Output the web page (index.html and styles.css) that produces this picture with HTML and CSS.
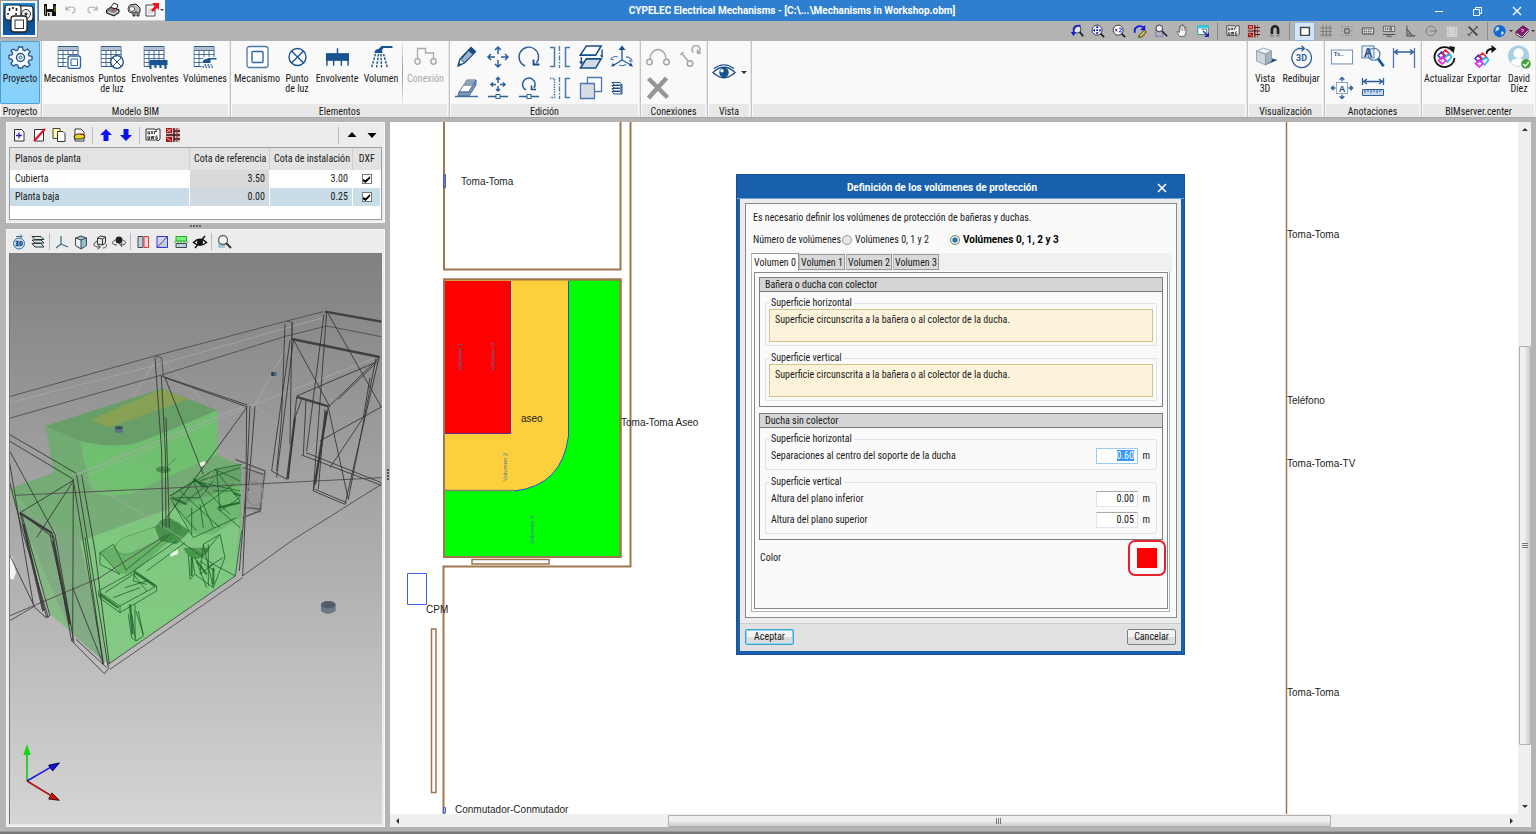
FILE: index.html
```html
<!DOCTYPE html>
<html lang="es">
<head>
<meta charset="utf-8">
<title>CYPELEC Electrical Mechanisms</title>
<link rel="stylesheet" href="styles.css">
</head>
<body>
<svg class="defs" aria-hidden="true">
  <symbol id="i-gear" viewBox="0 0 24 24"><path d="M10 2h4l.6 3 1.8.8L19 4l2.500 2.700L19.800 9l.8 1.800 2.900.5v3.400l-3 .6-.8 1.900 1.700 2.500-2.500 2.400-2.500-1.600-1.800.8L14 23h-4l-.6-2.800-1.800-.8L5 21.100l-2.500-2.400 1.700-2.500-.8-1.900-2.900-.6v-3.400l2.900-.5.8-1.800L2.500 5.700 5 4l2.600 1.700 1.800-.8z" fill="#f4faff" stroke="#2c5688" stroke-width="1.300"/><circle cx="12" cy="12.500" r="4" fill="none" stroke="#2c5688" stroke-width="1.500"/><circle cx="12" cy="12.500" r="1.500" fill="#fff" stroke="#2c5688"/></symbol>
  <symbol id="i-grid" viewBox="0 0 24 24"><path d="M.5 1.500h20v20H.5z" fill="#fff" stroke="#2f5c90"/><path d="M1 2h19v3H1z" fill="#b8bdcc"/><path d="M.5 5.500h20M.5 9.500h20M.5 13.500h20M.5 17.500h20M5.500 5v16M10.500 5v16M15.500 5v16" stroke="#4a6f9c" fill="none"/></symbol>
  <symbol id="i-mecs" viewBox="0 0 24 24"><use href="#i-grid"/><path d="M9 10h15v14H9z" fill="#f9f9f9"/><rect x="10.500" y="11" width="12.500" height="12.500" rx="2" fill="#fff" stroke="#2c66a6" stroke-width="1.300"/><path d="M13.500 14h6.500v6.500h-6.500z" fill="#fff" stroke="#2c66a6"/></symbol>
  <symbol id="i-luces" viewBox="0 0 24 24"><use href="#i-grid"/><circle cx="16.500" cy="17" r="6.300" fill="#fff" stroke="#1d4b80" stroke-width="1.300"/><path d="M12 12.500l9 9m0-9l-9 9" stroke="#1d4b80"/></symbol>
  <symbol id="i-envs" viewBox="0 0 24 24"><use href="#i-grid"/><path d="M7 21h17v3H7z" fill="#f9f9f9"/><path d="M6 15h18v5h-1v4h-2v-4h-3v3h-2v-3h-3v3h-2v-3H8v4H6z" fill="#175390"/></symbol>
  <symbol id="i-vols" viewBox="0 0 24 24"><use href="#i-grid"/><path d="M10 12h14v12H8v-6z" fill="#f9f9f9"/><path d="M9 18c0-3 2-4 4-4l2-1h8v1.500h-6L17 18z" fill="#175390"/><path d="M11 20h7M9 22h11" stroke="#175390" stroke-width="1.500" stroke-dasharray="1.500 1.500"/></symbol>
  <symbol id="i-mec" viewBox="0 0 24 24"><rect x="1.500" y="1.500" width="21" height="21" rx="2.500" fill="#fff" stroke="#4d79ab" stroke-width="1.300"/><rect x="6.500" y="6.500" width="11" height="11" rx="1" fill="#fff" stroke="#2c66a6" stroke-width="1.400"/></symbol>
  <symbol id="i-luz" viewBox="0 0 24 24"><circle cx="12" cy="12" r="8.500" fill="none" stroke="#1d5490" stroke-width="1.400"/><path d="M6 6l12 12M18 6L6 18" stroke="#1d5490" stroke-width="1.400"/></symbol>
  <symbol id="i-env" viewBox="0 0 26 24"><path d="M1 8h24v8H1z" fill="#175390"/><path d="M13 3v6M2 15v6M9 15v6M17 15v6M24 15v6" stroke="#175390" stroke-width="1.500"/></symbol>
  <symbol id="i-vol" viewBox="0 0 24 24"><path d="M5 8c0-3 2-4 4-4l3-3h11v2H14l-1.500 2 .5 3z" fill="#175390"/><path d="M6 9L2 23M9 9L7 23M11.500 9l.5 14M14 9l4 14" stroke="#175390" stroke-width="1.400" stroke-dasharray="2.500 1.200" fill="none"/></symbol>
  <symbol id="i-con" viewBox="0 0 24 24"><path d="M4 14V3.500h8V8h8v6" fill="none" stroke="#a9a9a9" stroke-width="1.300"/><circle cx="4" cy="16.500" r="2.700" fill="none" stroke="#a9a9a9" stroke-width="1.400"/><circle cx="20" cy="16.500" r="2.700" fill="none" stroke="#a9a9a9" stroke-width="1.400"/></symbol>
  <symbol id="i-pencil" viewBox="0 0 24 24"><path d="M3 21l2-7L16 2.500l4.500 4L9.500 18z" fill="#fff" stroke="#1b4d85" stroke-width="1.400"/><path d="M16 2.500l4.500 4-2.500 3-4.500-4zM3 21l1-3.500L6.500 20z" fill="#1b4d85"/><path d="M6 14.500l3.500 3L18 9.500 13.500 5.500z" fill="#9db4cf" stroke="#1b4d85"/><path d="M5 14l10-10" stroke="#1b4d85"/></symbol>
  <symbol id="i-move" viewBox="0 0 24 24"><path d="M12 9V2.500M12 15v6.500M9 12H2.500M15 12h6.500M9 5l3-3 3 3M9 19l3 3 3-3M5 9l-3 3 3 3M19 9l3 3-3 3" fill="none" stroke="#2b5f99" stroke-width="1.500"/></symbol>
  <symbol id="i-rot" viewBox="0 0 24 24"><path d="M8 21A9.800 9.800 0 1 1 19.500 18" fill="none" stroke="#2b5f99" stroke-width="1.400"/><path d="M16.500 14.500v5h6" fill="none" stroke="#1b4d85" stroke-width="1.800"/></symbol>
  <symbol id="i-sym" viewBox="0 0 24 24"><path d="M2 2.500h4.500v19H2M22 2.500h-4.500v19H22" fill="none" stroke="#4c78ab" stroke-width="1.500"/><path d="M11.500 1v22" stroke="#4c78ab" stroke-width="1.300" stroke-dasharray="5 1.500 1.500 1.500"/></symbol>
  <symbol id="i-symd" viewBox="0 0 24 24"><path d="M2 2.500h4.500v19H2" fill="none" stroke="#4c78ab" stroke-width="1.500" stroke-dasharray="1.500 1"/><path d="M22 2.500h-4.500v19H22" fill="none" stroke="#4c78ab" stroke-width="1.500"/><path d="M11.500 1v22" stroke="#4c78ab" stroke-width="1.300" stroke-dasharray="5 1.500 1.500 1.500"/></symbol>
  <symbol id="i-planes" viewBox="0 0 26 26"><path d="M8 1h16l-6 10H1.500z" fill="#fff" stroke="#164e8a" stroke-width="1.700"/><path d="M8 15h16l-6 10H1.500z" fill="#d5dbe6" stroke="#164e8a" stroke-width="1.700"/><path d="M25 5v7M2.500 13v7" stroke="#164e8a" stroke-width="1.500"/><path d="M22.500 11h5L25 14zM0 18h5l-2.500 3.500z" fill="#164e8a"/></symbol>
  <symbol id="i-axes" viewBox="0 0 24 24"><path d="M12 15V3M12 15l-8 5M12 15l9 5" stroke="#2b5f99" stroke-width="1.400" fill="none"/><path d="M8.500 5L12 .5 15.500 5zM3 18l-2 3.500L5 21zM19 21l4 .5-2-4z" fill="#164e8a"/><path d="M8 12c-3-1-6 0-7 2l3 1M16 12c3 0 6 2 6 4l-3 0M9 20c2 1 6 1 7-1" fill="none" stroke="#5a84b2" stroke-width="1.300"/></symbol>
  <symbol id="i-erase" viewBox="0 0 24 24"><path d="M4 16L12 4h9l-7 12z" fill="#fff" stroke="#46719f"/><path d="M12 4h9l-4 6H8z" fill="#8f9fb8"/><path d="M4 16h10l7-12v5l-7 11H3z" fill="#8296b5" stroke="#46719f"/><path d="M0 20.500h23" stroke="#46719f" stroke-width="1.500"/></symbol>
  <symbol id="i-movep" viewBox="0 0 24 24"><path d="M12 7V2M12 10v5M10 8.500H5.500M14 8.500h4.500M10 3.500l2-2 2 2M10 13l2 2 2-2M7 6.500l-2 2 2 2M17 6.500l2 2-2 2" fill="none" stroke="#2b5f99" stroke-width="1.500"/><path d="M2 20.500h8M14 20.500h8" stroke="#2b5f99" stroke-width="1.300"/><rect x="10" y="18.500" width="4" height="4" fill="none" stroke="#2b5f99"/></symbol>
  <symbol id="i-rotp" viewBox="0 0 24 24"><path d="M9 14A6.300 6.300 0 1 1 17 12" fill="none" stroke="#2b5f99" stroke-width="1.500"/><path d="M14.500 9.500v4h4.500" fill="none" stroke="#1b4d85" stroke-width="1.500"/><path d="M2 20.500h8M14 20.500h8" stroke="#2b5f99" stroke-width="1.300"/><rect x="10" y="18.500" width="4" height="4" fill="none" stroke="#2b5f99"/></symbol>
  <symbol id="i-copy2" viewBox="0 0 24 24"><path d="M8.500 1.500h14v14h-14z" fill="#fff" stroke="#4c78ab" stroke-width="1.300"/><path d="M1.500 7.500h14v15h-14z" fill="#d9dce6" stroke="#4c78ab" stroke-width="1.300"/></symbol>
  <symbol id="i-stack" viewBox="0 0 24 24"><g fill="#fff" stroke="#1b4d85"><path d="M2 15.500h8l2 2.500H4zM2 12.500h8l2 2.500H4zM2 9.500h8l2 2.500H4zM2 6.500h8l2 2.500H4z"/><path d="M12 8.500v9"/></g></symbol>
  <symbol id="i-arc" viewBox="0 0 24 24"><path d="M4 14a8 9.500 0 0 1 16 0" fill="none" stroke="#a3a3a3" stroke-width="1.300"/><circle cx="3.500" cy="17" r="2.800" fill="none" stroke="#a3a3a3" stroke-width="1.400"/><circle cx="20.500" cy="17" r="2.800" fill="none" stroke="#a3a3a3" stroke-width="1.400"/></symbol>
  <symbol id="i-recon" viewBox="0 0 24 24"><path d="M3 8.500L9 16M1.500 10l3-3" stroke="#a3a3a3" stroke-width="1.300"/><circle cx="11" cy="18.500" r="2.800" fill="none" stroke="#a3a3a3" stroke-width="1.400"/><path d="M14.500 7.500a4 4 0 1 1 5 0M22 8h-3.500V4.500" fill="none" stroke="#a3a3a3" stroke-width="1.400"/></symbol>
  <symbol id="i-x" viewBox="0 0 24 24"><path d="M2.500 2.500l19 19M20.500 2L2.500 22" stroke="#959595" stroke-width="4.500"/></symbol>
  <symbol id="i-eye" viewBox="0 0 24 20"><path d="M1 9.500Q12-1 23 9.500Q12 20 1 9.500z" fill="#fff" stroke="#1b4d85" stroke-width="1.300"/><path d="M2 5.500Q12-2 22 5.500" fill="none" stroke="#1b4d85" stroke-width="1.200"/><circle cx="12" cy="9.500" r="4.800" fill="#15508f"/><circle cx="10" cy="7.800" r="1.700" fill="#fff"/></symbol>
  <symbol id="i-v3d" viewBox="0 0 24 24"><path d="M12 20l12-5-7-2z" fill="#1b4d85"/><path d="M3 6l7-3 8 3-6 3z" fill="#eef1f4" stroke="#8795a6" stroke-width=".8"/><path d="M3 6l9 3v11l-9-4z" fill="#cfd5dc" stroke="#8795a6" stroke-width=".8"/><path d="M12 9l6-3v10l-6 4z" fill="#a9b4c1" stroke="#8795a6" stroke-width=".8"/></symbol>
  <symbol id="i-dim" viewBox="0 0 24 24"><path d="M1.500 3v20M22.500 3v20" stroke="#4c78ab" stroke-width="1.300"/><path d="M2 7h20M6 4.500L2.500 7 6 9.500M18 4.500L21.500 7 18 9.500" fill="none" stroke="#2b5f99" stroke-width="1.300"/></symbol>
  <symbol id="i-ruler" viewBox="0 0 24 24"><path d="M1.500 2v7M22.500 2v7M2 5.500h20M6 3L2.500 5.500 6 8M18 3l3.500 2.500L18 8" fill="none" stroke="#2b5f99" stroke-width="1.300"/><path d="M1.500 13.500h21v6h-21z" fill="#c9d8e8" stroke="#2b5f99"/><path d="M4 14v3M7 14v2M10 14v3M13 14v2M16 14v3M19 14v2" stroke="#2b5f99"/></symbol>
  <symbol id="i-bim" viewBox="0 0 24 24"><g fill="none" stroke-width="1.700" stroke-linejoin="round"><path d="M9 7L5.500 10.500 9 14 12.500 10.500z" stroke="#2338e0"/><path d="M13 5l-3.500 3.500L13 12l3.500-3.500z" stroke="#f0203a"/><path d="M14 11l3.500-1.500L19 12l-4 5-3.500-3.500z" stroke="#27b8f5"/><path d="M9.500 12L6 15.500l4 3.500 3.500-3.500z" stroke="#f02be0"/></g></symbol>
  <symbol id="i-act" viewBox="0 0 24 24"><use href="#i-bim"/><path d="M20 6A10 10 0 1 0 22 13" fill="none" stroke="#111" stroke-width="1.800"/><path d="M16.500 1l6 1-1.500 6.500z" fill="#111"/></symbol>
  <symbol id="i-exp" viewBox="0 0 24 24"><use href="#i-bim" x="-3" y="3"/><path d="M14 9c0-4 3-5 6-5" fill="none" stroke="#111" stroke-width="1.800"/><path d="M19 0l5 4-5 4z" fill="#111"/></symbol>
  <symbol id="i-user" viewBox="0 0 26 26"><circle cx="12" cy="12" r="11.500" fill="#a9cfe2"/><circle cx="12" cy="9" r="5.500" fill="#fff"/><path d="M3.500 19c2-6 15-6 17 0a11.500 11.500 0 0 1-17 0z" fill="#fff"/><circle cx="20" cy="20.500" r="5.200" fill="#43a236"/><path d="M17 20.500l2.300 2.500 3.700-4.500" fill="none" stroke="#fff" stroke-width="1.600"/></symbol>

  <symbol id="s-save" viewBox="0 0 16 16"><path d="M2 2h12v12H3l-1-1z" fill="#111"/><path d="M5 2h6v5H5z" fill="#fff"/><path d="M3 4h1v9H3zM12.500 4h1v6h-1z" fill="#8a8a1c"/><path d="M5 10h5v4H5z" fill="#ddd"/><path d="M6 11h1.500v3H6z" fill="#111"/></symbol>
  <symbol id="s-undo" viewBox="0 0 16 16"><path d="M3 4v4h4M3 8c2-4 9-4 9 0 0 2-2 3-3 3" fill="none" stroke="#b0b0b0" stroke-width="1.200"/></symbol>
  <symbol id="s-redo" viewBox="0 0 16 16"><path d="M13 4v4H9M13 8c-2-4-9-4-9 0 0 2 2 3 3 3" fill="none" stroke="#b0b0b0" stroke-width="1.200"/></symbol>
  <symbol id="s-print" viewBox="0 0 16 16"><path d="M5 6l4-5 4 2-2 5z" fill="#fff" stroke="#222"/><path d="M1.500 8l4-2.500 8.500 2v3L9 14l-7.500-3z" fill="#888" stroke="#111"/><path d="M3 10l6 2 4-3" stroke="#eee" fill="none"/><path d="M7 8h3" stroke="#c33"/></symbol>
  <symbol id="s-find" viewBox="0 0 16 16"><circle cx="6" cy="7" r="4" fill="#eee" stroke="#333"/><path d="M4 3l6-1 4 4v4h-1v4h-2v-4H9v4H7v-4" fill="#bbb" stroke="#222"/><circle cx="6" cy="7" r="2.500" fill="#fff" stroke="#555"/></symbol>
  <symbol id="s-export" viewBox="0 0 16 16"><path d="M2 3h9v11H2z" fill="#fff" stroke="#444"/><path d="M4 7h4M4 9h4M4 11h5" stroke="#bbb"/><path d="M8 1h7v7l-2-2-4 4-2-2 4-4z" fill="#f01020"/></symbol>
  <symbol id="s-zprev" viewBox="0 0 16 16"><circle cx="8" cy="6" r="4.500" fill="#dfe6ff" stroke="#222"/><path d="M11 9l4 5" stroke="#222" stroke-width="2"/><path d="M12 2C6 1 4 5 4 10" fill="none" stroke="#1218d8" stroke-width="2"/><path d="M1 9h6l-3 5z" fill="#1218d8"/></symbol>
  <symbol id="s-zall" viewBox="0 0 16 16"><circle cx="7" cy="7" r="5.700" fill="#fff" stroke="#222"/><path d="M11 11l4 4" stroke="#222" stroke-width="2"/><path d="M7 2l2 2.500H5zM7 12l2-2.500H5zM2 7l2.500-2v4zM12 7L9.500 5v4zM6 6h2v2H6z" fill="#1218d8"/></symbol>
  <symbol id="s-zx2" viewBox="0 0 16 16"><circle cx="7" cy="7" r="5.700" fill="#fff" stroke="#222"/><path d="M11 11l4 4" stroke="#222" stroke-width="2"/><path d="M3.500 5.500l2.500 3m0-3l-2.500 3M8 5h2.500v2L8 9h3" stroke="#1218d8" fill="none"/></symbol>
  <symbol id="s-redraw" viewBox="0 0 16 16"><path d="M2 10V6c3-5 8-4 10-2" fill="none" stroke="#1218d8" stroke-width="2"/><path d="M14 1v6H8z" fill="#1218d8"/><path d="M8 12l5-5 2 2-5 6-4 0z" fill="#d8d13a" stroke="#222"/><path d="M10 14l3-1" stroke="#c33"/></symbol>
  <symbol id="s-zwin" viewBox="0 0 16 16"><path d="M2 6h8v8H2z" fill="none" stroke="#33f" stroke-dasharray="1 1"/><circle cx="6" cy="5" r="3.800" fill="#eef" stroke="#222"/><path d="M9 8l6 6" stroke="#222" stroke-width="2"/></symbol>
  <symbol id="s-hand" viewBox="0 0 16 16"><path d="M5 14L2 9l1-1 2 2V3h1.500V1.500H8V1h1.500v1.500H11V4h1.500v6L11 14z" fill="#fff" stroke="#555"/><path d="M6.800 3v5M8.800 2.500V8M10.800 4v4" stroke="#777" stroke-width=".8"/></symbol>
  <symbol id="s-win" viewBox="0 0 16 16"><path d="M2 2h12v10H2z" fill="#fff" stroke="#1b8c99"/><path d="M2 1.500h12V5H2z" fill="#2fd0df"/><path d="M8 8l6 6M14 10v4h-4" stroke="#22a" stroke-width="1.500" fill="none"/><path d="M6 6h6v5" fill="none" stroke="#667"/></symbol>
  <symbol id="s-dxf" viewBox="0 0 16 16"><path d="M1 2h9l1 1.500L12 2h3v10l-2 2-1-1H1z" fill="#fff" stroke="#333"/><path d="M3 4v3h1.500V4.500M6 4l2 3M8 4L6 7M9.500 7V4.500H12M3 9v3h1.500V9.500M6 9l.7 3 .8-3 .8 3L9 9M12.500 9H11v3h1.500v-1.500" stroke="#222" stroke-width=".9" fill="none"/></symbol>
  <symbol id="s-dxfr" viewBox="0 0 16 16"><path d="M1 1h14v14H1z" fill="#d8b4b4"/><path d="M1 1h6v5H1zM1 10h6v5H1z" fill="#a11"/><path d="M2 2l4 3M6 2L2 5M2 11l4 3" stroke="#fff" stroke-width=".7"/><path d="M9 1v14M1 8h14M9 4h6M9 12h6" stroke="#311" stroke-width="1.300"/><path d="M12 1v14" stroke="#833"/></symbol>
  <symbol id="s-magnet" viewBox="0 0 16 16"><path d="M4.500 14V6a3.500 3.500 0 0 1 7 0v8" fill="none" stroke="#222" stroke-width="3"/><path d="M3 12.500h3M10 12.500h3" stroke="#ddd" stroke-width="1.500"/></symbol>
  <symbol id="s-sq" viewBox="0 0 16 16"><path d="M3 4h10v9H3z" fill="#fff" stroke="#444" stroke-width="1.700"/></symbol>
  <symbol id="s-mesh" viewBox="0 0 16 16"><path d="M4.500 1v14M8.500 1v14M12.500 1v14M1 4.500h14M1 8.500h14M1 12.500h14" stroke="#777"/></symbol>
  <symbol id="s-snap" viewBox="0 0 16 16"><path d="M5.500 5.500h5v5h-5z" fill="none" stroke="#444"/><path d="M2 3h1M6 3h1M9 3h1M13 3h1M2 8h1M13 8h1M2 13h1M6 13h1M9 13h1M13 13h1" stroke="#555"/></symbol>
  <symbol id="s-kbd" viewBox="0 0 16 16"><path d="M1.500 4.500h13v7h-13z" fill="#ddd" stroke="#444"/><path d="M3 6.500h10M3 8.500h10M3 10.500h10" stroke="#444" stroke-dasharray="1.500 1"/></symbol>
  <symbol id="s-110" viewBox="0 0 16 16"><path d="M1.500 2.500h13v6h-13z" fill="#ddd" stroke="#555"/><path d="M4 4v3M6.500 4v3M9 4v3h2V4zM1 12h14M5 14h6" stroke="#444" fill="none"/></symbol>
  <symbol id="s-ang" viewBox="0 0 16 16"><path d="M4.500 2v11.500H14M4.500 6l6 7M6 11h2" fill="none" stroke="#555" stroke-width="1.300"/></symbol>
  <symbol id="s-circ" viewBox="0 0 16 16"><circle cx="8" cy="8" r="5.500" fill="none" stroke="#777"/><path d="M7 8h8" stroke="#777"/></symbol>
  <symbol id="s-sel" viewBox="0 0 16 16"><path d="M2.500 3.500h11v11h-11z" fill="#c8c8c8" stroke="#e8e8e8" stroke-dasharray="1.500 1"/><path d="M5 6h6M5 9h6M5 12h6" stroke="#f4f4f4" stroke-dasharray="2 1"/></symbol>
  <symbol id="s-tools" viewBox="0 0 16 16"><path d="M3 3l10 10" stroke="#444" stroke-width="2"/><path d="M13 3L3 13" stroke="#555" stroke-width="1.500"/><path d="M11 2l3 3M2 11l2 3" stroke="#444"/></symbol>
  <symbol id="s-globe" viewBox="0 0 16 16"><circle cx="7.500" cy="8" r="7" fill="#1567d6"/><path d="M3 5c3-3 5-1 4 1s-3 1-4 3zM9 9c2-1 4 0 3 2l-2 2z" fill="#bde4ff"/></symbol>
  <symbol id="s-book" viewBox="0 0 16 16"><path d="M1 9v3l7 4 7-7V6" fill="#fff" stroke="#400c38"/><path d="M1 9l8-7 6 4-7 8z" fill="#8a1c74" stroke="#400c38"/><path d="M7 6l3 1-2 2" stroke="#ffd0f4" fill="none"/></symbol>
  <symbol id="s-new" viewBox="0 0 16 16"><path d="M3.500 2.500h7l2.500 2.500v9h-9.500z" fill="#fff" stroke="#333"/><path d="M8 5.500v6M5 8.500h6" stroke="#22b" stroke-width="1.300"/></symbol>
  <symbol id="s-del" viewBox="0 0 16 16"><path d="M3.500 2.500h9v11.500h-9z" fill="#fff" stroke="#333"/><path d="M3 14L14 2" stroke="#e01020" stroke-width="2.200"/></symbol>
  <symbol id="s-dup" viewBox="0 0 16 16"><path d="M2 1.500h7v10H2z" fill="#fffa9e" stroke="#444"/><path d="M6.500 4.500H12l2 2v8H6.500z" fill="#fff" stroke="#333"/></symbol>
  <symbol id="s-ren" viewBox="0 0 16 16"><path d="M4 2h6l3 3v9H4z" fill="#fff" stroke="#333"/><path d="M3 9l3-2h6l2 3-3 2H4z" fill="#e8d423" stroke="#222"/><path d="M9 7.500h3l2 2.500" stroke="#c22" fill="none"/></symbol>
  <symbol id="s-up" viewBox="0 0 16 16"><path d="M8 2l6 6h-3.500v6h-5V8H2z" fill="#0a12f0"/></symbol>
  <symbol id="s-down" viewBox="0 0 16 16"><path d="M8 14l6-6h-3.500V2h-5v6H2z" fill="#0a12f0"/></symbol>
  <symbol id="s-tup" viewBox="0 0 16 16"><path d="M3.500 10L8 5l4.500 5z" fill="#000"/></symbol>
  <symbol id="s-tdn" viewBox="0 0 16 16"><path d="M3.500 6L8 11l4.500-5z" fill="#000"/></symbol>
  <symbol id="s-3d" viewBox="0 0 16 16"><circle cx="8" cy="9.500" r="5.500" fill="#cfe0ef" stroke="#3c6da3"/><path d="M4.500 7.500h2.500v4H4.500M5 9.500h2M9 7.500v4c3 0 3-4 0-4" fill="none" stroke="#154f8c" stroke-width="1.300"/><path d="M5 2.500h6l-1.500-2M11 2.500L9.500 4" stroke="#3c6da3" fill="none"/></symbol>
  <symbol id="s-layers" viewBox="0 0 16 16"><path d="M2 2.500h9l3 3H5zM2 6h9l3 3H5zM2 9.500h9l3 3.500H5z" fill="#d4e8ee" stroke="#333"/></symbol>
  <symbol id="s-ax" viewBox="0 0 16 16"><path d="M7 2v8L2 14M7 10l7 3" fill="none" stroke="#3c7089" stroke-width="1.300"/></symbol>
  <symbol id="s-cube" viewBox="0 0 16 16"><path d="M2.500 4L8 2l5.500 2v7.500L8 15l-5.500-3.500z" fill="#8fc1d8" stroke="#444"/><path d="M3 4.500L8 6v8L3 11z" fill="#e8f3f7"/><path d="M2.500 4L8 6l5.500-2M8 6v9" fill="none" stroke="#444"/></symbol>
  <symbol id="s-orb" viewBox="0 0 16 16"><path d="M5.500 4l3-2 5 1v6l-3 2-5-1z" fill="#dfe9ee" stroke="#333"/><path d="M5.500 4l5 1 3-2M10.500 5v6" fill="none" stroke="#333"/><path d="M5 7c-5 3-4 6 2 6M5.500 10.500l3 2.500-3 2M14 10c2 2-1 4-3 4" fill="none" stroke="#444"/></symbol>
  <symbol id="s-look" viewBox="0 0 16 16"><circle cx="8" cy="6" r="3.500" fill="#222"/><path d="M4 6c-4 2-3 5 2 5M12 6c4 2 3 5-2 5l1-2M8 9l3 4" fill="none" stroke="#444"/></symbol>
  <symbol id="s-cutr" viewBox="0 0 16 16"><path d="M3 2.500h5v11H3z" fill="#b7d2dd" stroke="#445"/><path d="M9 2.500h4.500v11H9z" fill="#f8d6d6" stroke="#e33"/></symbol>
  <symbol id="s-cutv" viewBox="0 0 16 16"><path d="M3 2.500h10.500v11H3z" fill="#d6d2fb" stroke="#33c"/><path d="M8 8h5v5H4z" fill="#b9cfe0"/><path d="M3 13.500L13.500 2.500" stroke="#446"/></symbol>
  <symbol id="s-cutg" viewBox="0 0 16 16"><path d="M3 2.500h10.500v4.500H3z" fill="#7bf07b" stroke="#2a2"/><path d="M3 9.500h10.500v4H3z" fill="#b7d2dd" stroke="#445"/><path d="M1 8h14" stroke="#2a2" stroke-dasharray="2 1"/></symbol>
  <symbol id="s-hide" viewBox="0 0 16 16"><path d="M1.500 8.500Q8 2 14.500 8.500Q8 14 1.500 8.500z" fill="#fff" stroke="#111" stroke-width="1.600"/><circle cx="8" cy="8.300" r="3" fill="#111"/><path d="M3 14L13 2" stroke="#111" stroke-width="1.500"/></symbol>
  <symbol id="s-mag" viewBox="0 0 16 16"><path d="M2 5h7v9H2z" fill="#a7c9d6"/><circle cx="7" cy="6" r="4.500" fill="#eef5f8" stroke="#666" stroke-width="1.300"/><path d="M10 9l5 5" stroke="#333" stroke-width="2"/></symbol>
</svg>

<div class="app">
  <header class="top">
    <button class="logo" aria-label="CYPELEC">
      <svg viewBox="0 0 32 32"><defs><linearGradient id="lg" x1="0" y1="0" x2="0" y2="1"><stop offset="0" stop-color="#1e8ad8"/><stop offset=".5" stop-color="#0c4c92"/><stop offset="1" stop-color="#0b5aa8"/></linearGradient></defs><path d="M0 0h32v32H0z" fill="url(#lg)"/><rect x="14" y="3" width="16" height="15" rx="3" fill="#fff" stroke="#222" stroke-width="1.200"/><circle cx="23" cy="11" r="4.500" fill="#eee" stroke="#333"/><circle cx="23" cy="11" r="1.500" fill="#333"/><rect x="2" y="2" width="16" height="15" rx="3" fill="#fff" stroke="#222" stroke-width="1.200"/><path d="M6.500 5v3M13.500 5v3M10 4v2M5 10v2M13 10v2" stroke="#222" stroke-width="1.600" fill="none"/><rect x="8" y="13" width="16" height="16" rx="3" fill="#fff" stroke="#222" stroke-width="1.300"/><rect x="12" y="17" width="8.500" height="8.500" fill="#fff" stroke="#333"/></svg>
    </button>
    <div class="titlebar">
      <nav class="quick">
        <button aria-label="Guardar"><svg><use href="#s-save"/></svg></button><button aria-label="Deshacer"><svg><use href="#s-undo"/></svg></button><button aria-label="Rehacer"><svg><use href="#s-redo"/></svg></button><button aria-label="Imprimir"><svg><use href="#s-print"/></svg></button><button aria-label="Buscar"><svg><use href="#s-find"/></svg></button><button aria-label="Exportar archivo"><svg><use href="#s-export"/></svg><i class="caret"></i></button>
      </nav>
      <h1>CYPELEC Electrical Mechanisms - [C:\...\Mechanisms in Workshop.obm]</h1>
      <div class="wincontrols">
        <button aria-label="Minimizar"><svg viewBox="0 0 12 12"><path d="M2 6.500h8" stroke="#fff"/></svg></button><button aria-label="Restaurar"><svg viewBox="0 0 12 12"><path d="M1.500 4.500h6v6h-6zM3.500 4V2.500h6v6H8" fill="none" stroke="#fff"/></svg></button><button aria-label="Cerrar"><svg viewBox="0 0 12 12"><path d="M2 2l8 8M10 2l-8 8" stroke="#fff" stroke-width="1.300"/></svg></button>
      </div>
    </div>
    <div class="tools">
      <button aria-label="Vista previa"><svg><use href="#s-zprev"/></svg></button><button aria-label="Ver todo"><svg><use href="#s-zall"/></svg></button><button aria-label="Doble"><svg><use href="#s-zx2"/></svg></button><button aria-label="Redibujar vista"><svg><use href="#s-redraw"/></svg></button><button aria-label="Marcar zoom"><svg><use href="#s-zwin"/></svg></button><button aria-label="Mover imagen"><svg><use href="#s-hand"/></svg></button><button aria-label="Ventana completa"><svg><use href="#s-win"/></svg></button>
      <i class="tsep"></i>
      <button aria-label="Plantillas"><svg><use href="#s-dxf"/></svg></button><button aria-label="Capas de plantilla"><svg><use href="#s-dxfr"/></svg></button><button aria-label="Capturas"><svg><use href="#s-magnet"/></svg></button>
      <i class="tsep"></i>
      <button class="on" aria-label="Referencia"><svg><use href="#s-sq"/></svg></button><button aria-label="Rejilla"><svg><use href="#s-mesh"/></svg></button><button aria-label="Puntos"><svg><use href="#s-snap"/></svg></button><button aria-label="Teclado"><svg><use href="#s-kbd"/></svg></button><button aria-label="Coordenadas"><svg><use href="#s-110"/></svg></button><button aria-label="Ortogonal"><svg><use href="#s-ang"/></svg></button><button aria-label="Círculo"><svg><use href="#s-circ"/></svg></button><button aria-label="Selección"><svg><use href="#s-sel"/></svg></button><button aria-label="Herramientas"><svg><use href="#s-tools"/></svg></button>
      <i class="tsep"></i>
      <button aria-label="Idioma"><svg><use href="#s-globe"/></svg><i class="caret"></i></button><button aria-label="Ayuda"><svg><use href="#s-book"/></svg><i class="caret"></i></button>
    </div>
  </header>

  <div class="ribbon">
    <section class="group g-proy"><div class="items"><button class="rb on"><svg><use href="#i-gear"/></svg><span>Proyecto</span></button></div><h2>Proyecto</h2></section>
    <section class="group g-modelo"><div class="items">
      <button class="rb"><svg><use href="#i-mecs"/></svg><span>Mecanismos</span></button>
      <button class="rb"><svg><use href="#i-luces"/></svg><span>Puntos<br>de luz</span></button>
      <button class="rb"><svg><use href="#i-envs"/></svg><span>Envolventes</span></button>
      <button class="rb"><svg><use href="#i-vols"/></svg><span>Volúmenes</span></button>
    </div><h2>Modelo BIM</h2></section>
    <section class="group g-elem"><div class="items">
      <button class="rb"><svg><use href="#i-mec"/></svg><span>Mecanismo</span></button>
      <button class="rb"><svg><use href="#i-luz"/></svg><span>Punto<br>de luz</span></button>
      <button class="rb"><svg><use href="#i-env"/></svg><span>Envolvente</span></button>
      <button class="rb"><svg><use href="#i-vol"/></svg><span>Volumen</span></button>
      <button class="rb off" disabled><svg><use href="#i-con"/></svg><span>Conexión</span></button>
    </div><h2>Elementos</h2></section>
    <section class="group g-edic"><div class="items">
      <button aria-label="Editar"><svg><use href="#i-pencil"/></svg></button><button aria-label="Mover"><svg><use href="#i-move"/></svg></button><button aria-label="Girar"><svg><use href="#i-rot"/></svg></button><button aria-label="Simetría"><svg><use href="#i-sym"/></svg></button><button aria-label="Copiar a planos"><svg><use href="#i-planes"/></svg></button><button aria-label="Ejes"><svg><use href="#i-axes"/></svg></button>
      <button aria-label="Borrar"><svg><use href="#i-erase"/></svg></button><button aria-label="Mover punto"><svg><use href="#i-movep"/></svg></button><button aria-label="Girar punto"><svg><use href="#i-rotp"/></svg></button><button aria-label="Simetría con copia"><svg><use href="#i-symd"/></svg></button><button aria-label="Copiar"><svg><use href="#i-copy2"/></svg></button><button aria-label="Capas"><svg><use href="#i-stack"/></svg></button>
    </div><h2>Edición</h2></section>
    <section class="group g-conex"><div class="items">
      <button aria-label="Unir"><svg><use href="#i-arc"/></svg></button><button aria-label="Reconectar"><svg><use href="#i-recon"/></svg></button><button aria-label="Eliminar conexión"><svg><use href="#i-x"/></svg></button>
    </div><h2>Conexiones</h2></section>
    <section class="group g-vista"><div class="items"><button aria-label="Vista"><svg><use href="#i-eye"/></svg><i class="caret"></i></button></div><h2>Vista</h2></section>
    <section class="group g-fill"><div class="items"></div><h2></h2></section>
    <section class="group g-visu"><div class="items">
      <button class="rb"><svg><use href="#i-v3d"/></svg><span>Vista<br>3D</span></button>
      <button class="rb"><svg viewBox="0 0 24 24"><path d="M16.500 4A9.800 9.800 0 1 1 9 3.500" fill="none" stroke="#2b5f99" stroke-width="1.300"/><path d="M8 3.500h6M12 .8l3 2.700-3 2.700" fill="none" stroke="#2b5f99" stroke-width="1.300"/><text x="12" y="16" text-anchor="middle" class="ic-3d">3D</text></svg><span>Redibujar</span></button>
    </div><h2>Visualización</h2></section>
    <section class="group g-anot"><div class="items">
      <button aria-label="Texto"><svg viewBox="0 0 26 24"><rect x="1.500" y="4.500" width="23" height="15" fill="#fff" stroke="#5d86b5"/><text x="4" y="11" class="ic-tx">Tx...</text></svg></button><button aria-label="Buscar texto"><svg viewBox="0 0 26 26"><rect x="1" y="1" width="13" height="13" fill="#e9eef5" stroke="#4c78ab"/><circle cx="14" cy="10" r="6.500" fill="none" stroke="#4c78ab" stroke-width="1.300"/><path d="M18.500 15l6 8" stroke="#1b5a9a" stroke-width="3"/><text x="3" y="13" class="ic-a">A</text></svg></button><button aria-label="Cota"><svg><use href="#i-dim"/></svg></button><button aria-label="Mover texto"><svg viewBox="0 0 26 26"><rect x="7" y="7" width="12" height="12" fill="#fff" stroke="#7fa0c6"/><text x="13" y="17" text-anchor="middle" class="ic-as">A</text><path d="M13 6V2M13 20v4M6 13H2M20 13h4M10.500 4L13 1.500 15.500 4M10.500 22l2.500 2.500 2.500-2.500M4 10.500L1.500 13 4 15.500M22 10.500l2.500 2.500-2.500 2.500" fill="none" stroke="#2b5f99" stroke-width="1.400"/></svg></button><button aria-label="Medir"><svg><use href="#i-ruler"/></svg></button>
    </div><h2>Anotaciones</h2></section>
    <section class="group g-bim"><div class="items">
      <button class="rb"><svg><use href="#i-act"/></svg><span>Actualizar</span></button>
      <button class="rb"><svg><use href="#i-exp"/></svg><span>Exportar</span></button>
      <button class="rb"><svg><use href="#i-user"/></svg><span>David<br>Díez</span></button>
    </div><h2>BIMserver.center</h2></section>
  </div>

  <main class="work">
    <aside class="side">
      <section class="panel">
        <div class="bar">
          <button aria-label="Nuevo"><svg><use href="#s-new"/></svg></button><button aria-label="Borrar plano"><svg><use href="#s-del"/></svg></button><button aria-label="Copiar plano"><svg><use href="#s-dup"/></svg></button><button aria-label="Renombrar"><svg><use href="#s-ren"/></svg></button><i class="tsep"></i><button aria-label="Subir"><svg><use href="#s-up"/></svg></button><button aria-label="Bajar"><svg><use href="#s-down"/></svg></button><i class="tsep"></i><button aria-label="DXF"><svg><use href="#s-dxf"/></svg></button><button aria-label="Capas DXF"><svg><use href="#s-dxfr"/></svg></button><i class="grow"></i><i class="tsep"></i><button aria-label="Plano superior"><svg><use href="#s-tup"/></svg></button><button aria-label="Plano inferior"><svg><use href="#s-tdn"/></svg></button>
        </div>
        <div class="list">
          <table>
            <colgroup><col><col class="c-ref"><col class="c-ins"><col class="c-dxf"></colgroup>
            <thead><tr><th>Planos de planta</th><th>Cota de referencia</th><th>Cota de instalación</th><th>DXF</th></tr></thead>
            <tbody>
              <tr><td>Cubierta</td><td class="ref">3.50</td><td>3.00</td><td><input type="checkbox" checked aria-label="DXF Cubierta"></td></tr>
              <tr class="sel"><td>Planta baja</td><td class="ref">0.00</td><td>0.25</td><td><input type="checkbox" checked aria-label="DXF Planta baja"></td></tr>
            </tbody>
          </table>
        </div>
      </section>
      <div class="split-h"></div>
      <section class="panel view">
        <div class="bar slim">
          <button aria-label="Redibujar 3D"><svg><use href="#s-3d"/></svg></button><button aria-label="Capas 3D"><svg><use href="#s-layers"/></svg></button><i class="tsep"></i><button aria-label="Ejes 3D"><svg><use href="#s-ax"/></svg></button><button aria-label="Cubo"><svg><use href="#s-cube"/></svg></button><button aria-label="Orbitar"><svg><use href="#s-orb"/></svg></button><button aria-label="Mirar"><svg><use href="#s-look"/></svg></button><i class="tsep"></i><button aria-label="Corte rojo"><svg><use href="#s-cutr"/></svg></button><button aria-label="Corte azul"><svg><use href="#s-cutv"/></svg></button><button aria-label="Corte verde"><svg><use href="#s-cutg"/></svg></button><button aria-label="Ocultar"><svg><use href="#s-hide"/></svg></button><i class="tsep"></i><button aria-label="Zoom"><svg><use href="#s-mag"/></svg></button>
        </div>
        <div class="scene">
          <svg role="img" aria-label="Vista 3D">
            <g transform="translate(-10 -2) scale(.3333)" fill="none" stroke-width="3" stroke="#555">
              <g stroke="none">
                <path d="M28 915l8 0 12 50-8 22-12-6z" fill="#f4f4f4"/>
                <path d="M137 525L484 413 652 478V612L725 645V840L706 975 325 1240 210 1140 150 1090 30 712 162 665z" fill="#5fc05f" fill-opacity=".55"/>
                <path d="M137 525L484 413 652 478Q520 535 400 580Q320 592 240 570z" fill="#639a63" fill-opacity=".75"/>
                <path d="M275 505L484 415 565 445 325 530z" fill="#98a24a" fill-opacity=".65"/>
                <path d="M137 525L240 570 275 720 162 665z" fill="#6aa86a" fill-opacity=".6"/>
                <path d="M240 570Q320 592 400 580Q520 540 652 478V612L390 730 310 735 270 700z" fill="#6cc66c" fill-opacity=".7"/>
                <path d="M30 712L162 665 310 735 390 730 652 612 725 645V700L510 770 240 870 100 790z" fill="#6fa670" fill-opacity=".6"/>
                <path d="M240 870L725 700 706 975 325 1240z" fill="#7ed47e" fill-opacity=".6"/>
                <path d="M40 750L100 790 240 870 315 1235 215 1150z" fill="#7fa080" fill-opacity=".6"/>
                <path d="M300 905L405 855 530 810Q560 820 530 850L420 950Q370 990 345 950z" fill="#58a158" fill-opacity=".6"/>
                <path d="M345 890Q350 862 400 850L500 815Q540 815 520 845L400 905Q360 920 345 890z" fill="#7cc47c" stroke="#4d964d" stroke-width="2"/>
                <path d="M465 830Q480 800 510 800L570 840 530 880 480 870z" fill="#2f7c36" fill-opacity=".7"/>
                <path d="M550 890H630Q620 920 585 925 560 915 550 890z" fill="#3b8a40" fill-opacity=".8"/>
                <path d="M510 735L645 655 725 640 722 800 640 850 580 850z" fill="#2f7c36" fill-opacity=".2"/>
                <ellipse cx="490" cy="656" rx="22" ry="10" fill="#4d8d4d"/>
                <path d="M598 635l18-5v12l-16 6zM510 905l24-10v14l-22 8z" fill="#e6f4e0"/>
                <path d="M728 660L795 665 785 790 728 775z" fill="#8f8f8f" fill-opacity=".6"/>
              </g>
              <g stroke="#aaa" stroke-opacity=".7">
                <path d="M28 455L460 345 970 200M400 440L465 330M485 325L620 460M760 470L860 290M230 670L560 870 706 970M245 680L740 470 1130 320M760 460L830 520M725 975L920 840M775 865L950 570M325 1240L400 1100M640 650L600 750"/>
                <path d="M236 668L740 462M350 950L300 1060M215 670L245 665" stroke-width="4"/>
              </g>
              <g stroke="#555">
                <path d="M28 437L464 315 860 210 970 182M28 502L485 372 860 255 980 225 1144 257M464 315L485 320 490 375M858 210L878 214 876 260M45 733L750 700 1144 680M28 1095L300 980 500 850M28 1110L105 1065M880 866L1144 700M728 975L880 866M330 1255L728 980M325 1240L706 975"/>
              </g>
              <g stroke="#333" stroke-opacity=".85">
                <path d="M484 375L742 462M494 380L742 468M740 470L500 800M495 380L610 670M465 320L485 600 488 830M484 375L496 600 498 830M498 500L508 830M740 465L738 720 718 960M750 465L728 975M765 465L745 720"/>
                <path d="M28 550L230 668M28 570L220 685M28 598L165 850M220 685L218 1170M230 672L325 1250M222 700L310 1240M245 672L285 900 328 1240M220 688L60 785M220 690L110 860M28 630L100 1060M28 690L70 850 145 1100M60 785L155 845 165 870M65 790L150 1095M80 800L160 860M60 785L140 1100M155 845L215 1170M165 850L222 1175M150 850L210 1120M105 1070L138 1100 148 1095M215 1170L313 1268 328 1250M228 1165L320 1250M218 1010L310 1240M28 910L105 1070M255 860L310 1240"/>
                <path d="M980 186L940 720M985 188L1144 468M972 190L920 600M870 268L815 660M880 268L830 680M878 262L990 468M1138 316L1035 760M1128 322L1045 745M1138 320L985 468M1135 330L1015 445M1125 335L890 435M890 438L865 685M905 445L885 500M985 468L940 720 1035 760M975 475L955 715M945 715L1040 755M815 660L862 686M918 605L1144 695M905 612L1144 703M918 450L910 612M1144 468L960 570M985 470L1045 745M1110 380L1090 500 990 650M855 220L845 500 830 660M876 214L870 580"/>
                <path d="M975 182L1144 212M876 264L1138 318M890 438L985 466M60 786L155 846M862 684L885 500M945 700L980 480M130 1080L70 820M210 1120L160 870" stroke-width="7"/>
              </g>
              <g stroke="#155c24" stroke-opacity=".75">
                <path d="M510 735L645 655 725 640M510 735L580 690 720 720M510 740L580 860 710 800M520 760L590 840M580 690L640 830M645 655L720 750M645 655L720 690M650 660L660 780 720 740M600 690L720 650M540 720L660 830M560 800L700 700M600 700L640 740 690 790M575 770L575 850M600 760L610 830M640 720L700 720M530 740L600 740 640 690M580 680L610 710 560 750M650 770L720 830"/>
                <path d="M580 685L625 710M700 725L722 735M655 770L720 755M515 740L560 760" stroke-width="7"/>
                <path d="M610 880L660 850 675 920 640 1010 585 970 570 985 565 910M610 880L640 1010M585 920L620 1010M610 880L600 970 640 940M625 880L625 1005M540 870L640 940 706 975M660 850L610 910M575 915L585 970M600 930L645 960M620 950L670 920M725 840L706 975"/>
                <path d="M590 930L620 970M575 920V975M640 950V1000" stroke-width="6"/>
                <path d="M300 905L340 880 380 960M300 905L360 970M300 905V940L360 970M295 1020L405 960 470 1005 470 1020 360 1085 298 1040zM300 1025L360 1065 470 1005M360 1065V1085M405 960L400 990 440 1000M385 1090L395 1160 408 1170 430 1155 415 1080M395 1090L408 1170M408 1080L430 1150M405 1060V1160M315 1025L400 970 440 1020M340 1040L420 1010M375 1010L440 990M510 850L380 955M530 870L400 960M555 875L440 960"/>
                <path d="M298 1030L355 1070M405 965L465 1005M390 1060L398 1150" stroke-width="7"/>
              </g>
              <path d="M706 625L795 660 780 780 728 800M730 650L790 670M740 770L785 775" stroke="#555" stroke-width="4"/>
              <ellipse cx="765" cy="728" rx="24" ry="36" stroke="#888" stroke-width="4"/>
              <path d="M490 656L530 620" stroke="#4d8d4d"/>
              <g stroke="none">
                <path d="M963 1060v20q20 18 44 0v-20z" fill="#6c7888"/><ellipse cx="985" cy="1061" rx="22" ry="11" fill="#525b68"/>
                <path d="M345 530v12q12 8 24 0v-12z" fill="#5b7288"/><ellipse cx="357" cy="530" rx="12" ry="5" fill="#3f4d5e"/>
                <path d="M814 363h16v12h-16z" fill="#4f6a88"/><path d="M814 363h8v12h-8z" fill="#2f4055"/>
              </g>
              <g stroke-width="5"><path d="M81 1590V1510" stroke="#18c818"/><path d="M81 1590L150 1550" stroke="#1818e8"/><path d="M81 1590L150 1632" stroke="#b01010"/></g>
              <path d="M81 1480L92 1512H70z" fill="#12d812" stroke="none"/><path d="M178 1536L146 1543 158 1560z" fill="#1010f0" stroke="#003"/><path d="M178 1648L156 1626 146 1644z" fill="#c81414" stroke="#400"/>
            </g>
          </svg>
        </div>
      </section>
    </aside>
    <div class="split-v"></div>
    <section class="plan">
      <svg class="drawing" role="img" aria-label="Planta">
        <g transform="translate(-390 -122)" fill="none" stroke="#a0764e" stroke-width="2">
          <path d="M444 122V269.500H620.500V122M630.500 122V566.500H443.500V814"/>
          <path d="M444 279.500H620.500V557H444z" fill="#0f0"/>
          <path d="M444 280H568.500V436Q562 486 514 491H444z" fill="#fccf3c" stroke="none"/>
          <path d="M568.500 281V436Q562 486 514 491" stroke="#1450e0" stroke-width="1"/><path d="M444 490.500h70" stroke="#7a8a6a" stroke-width="1.500"/>
          <path d="M445 281H510.500V433.500H445z" fill="#f00" stroke="none"/><path d="M510.500 281V433.500H445" stroke="#5a2ca0" stroke-width="1"/>
          <path d="M444 279.500H620.500V557H444z"/>
          <path d="M472 559.500H549V564H472zM431.500 629H436V792.500H431.500zM1286.500 122V814" stroke-width="1.500"/>
          <path d="M407.500 573.500H426.500V604.500H407.500zM443.500 174.500H445.500V188H443.500zM444 181h2M443.500 807.500H445.500V813H443.500z" stroke="#3a62e8" stroke-width="1"/>
        </g>
        <g transform="translate(-390 -122)" class="lbl">
          <text x="461" y="185">Toma-Toma</text><text x="521" y="422">aseo</text><text x="621" y="426">Toma-Toma Aseo</text><text x="426" y="613">CPM</text><text x="455" y="813">Conmutador-Conmutador</text>
          <text x="1287" y="238">Toma-Toma</text><text x="1287" y="404">Teléfono</text><text x="1287" y="467">Toma-Toma-TV</text><text x="1287" y="696">Toma-Toma</text>
        </g>
        <g transform="translate(-390 -122)" class="vlbl">
          <text transform="translate(462 371) rotate(-90)">Volumen 1</text><text transform="translate(495 371) rotate(-90)">Volumen 0</text><text transform="translate(507 481) rotate(-90)">Volumen 2</text><text transform="translate(534 544) rotate(-90)">Volumen 3</text>
        </g>
      </svg>
      <div class="sb v"><i class="arr up"></i><i class="g1"></i><i class="thumb"></i><i class="g2"></i><i class="arr dn"></i></div>
      <div class="sb h"><i class="arr lf"></i><i class="g1"></i><i class="thumb"></i><i class="g2"></i><i class="arr rt"></i></div>

      <form class="dialog" role="dialog" aria-labelledby="dt">
        <header><h2 id="dt">Definición de los volúmenes de protección</h2><button type="button" aria-label="Cerrar diálogo"><svg viewBox="0 0 12 12"><path d="M2 2l8 8M10 2l-8 8" stroke="#fff" stroke-width="1.500"/></svg></button></header>
        <div class="dbody">
          <div class="frame">
            <p>Es necesario definir los volúmenes de protección de bañeras y duchas.</p>
            <div class="radios"><span>Número de volúmenes</span><label><input type="radio" name="n">Volúmenes 0, 1 y 2</label><label class="b"><input type="radio" name="n" checked>Volúmenes 0, 1, 2 y 3</label></div>
            <div class="tabs" role="tablist"><button type="button" role="tab" aria-selected="true">Volumen 0</button><button type="button" role="tab">Volumen 1</button><button type="button" role="tab">Volumen 2</button><button type="button" role="tab">Volumen 3</button></div>
            <div class="page"><div class="page-in">
              <section class="box"><h3>Bañera o ducha con colector</h3>
                <fieldset><legend>Superficie horizontal</legend><div class="note">Superficie circunscrita a la bañera o al colector de la ducha.</div></fieldset>
                <fieldset><legend>Superficie vertical</legend><div class="note">Superficie circunscrita a la bañera o al colector de la ducha.</div></fieldset>
              </section>
              <section class="box"><h3>Ducha sin colector</h3>
                <fieldset><legend>Superficie horizontal</legend><div class="row"><label for="sep">Separaciones al centro del soporte de la ducha</label><input id="sep" class="focus" type="text" value="0.60"><span>m</span></div></fieldset>
                <fieldset><legend>Superficie vertical</legend><div class="row"><label for="inf">Altura del plano inferior</label><input id="inf" type="text" value="0.00"><span>m</span></div><div class="row"><label for="sup">Altura del plano superior</label><input id="sup" type="text" value="0.05"><span>m</span></div></fieldset>
              </section>
              <div class="color"><span>Color</span><button type="button" class="swatch" aria-label="Color"><i></i></button></div>
            </div></div>
          </div>
        </div>
        <footer><button type="submit" class="def">Aceptar</button><button type="button">Cancelar</button></footer>
      </form>
    </section>
  </main>
  <div class="bottom"></div>
</div>
<script src="main.js"></script>
</body>
</html>
```
FILE: styles.css
```css
*{box-sizing:border-box}
body{margin:0;font:10px/12px "Roboto Condensed",Roboto,"Liberation Sans",sans-serif;color:#1a1a1a;background:#b4b4b4}
button{font:inherit;color:inherit;background:none;border:0;padding:0;margin:0;display:flex;align-items:center;justify-content:center}
h1,h2,h3,p{margin:0;font:inherit}
i{display:block}
.defs{position:absolute;width:0;height:0}
.app{height:100vh;display:flex;flex-direction:column;overflow:hidden}

.top{display:grid;grid-template:21px 20px / 38px 1fr;background:#b4b4b4;flex:none}
.logo{grid-row:1 / 3;background:#f4f4f4;border:1px solid #999;margin-bottom:3px}
.logo svg{width:32px;height:32px}
.titlebar{display:flex;background:#2f7fd0;align-items:stretch;padding-left:1px}
.quick{display:flex;background:#f9f9f9;width:126px;align-items:center;border-bottom:1px solid #ccc}
.quick button{width:21px}
.quick svg,.bar svg{width:16px;height:16px;flex:none}
.quick button:last-child{justify-content:flex-start}
.quick .caret{margin-left:0}
.titlebar h1{flex:1;text-align:center;color:#fff;font:700 10px/21px Roboto,"Liberation Sans",sans-serif}
.wincontrols{display:flex;width:117px}
.wincontrols button{flex:1}
.wincontrols svg{width:12px;height:12px}
.tools{display:flex;justify-content:flex-end;align-items:center}
.tools button{width:21px;height:19px}
.tools button:nth-last-child(-n+2){width:22px}
.tools .on{background:#d3e5f8;border:1px solid #8fb4dc}
.tools svg{width:14px;height:14px;flex:none}
.tsep{width:1px;height:18px;background:#8a8a8a;margin:0 4px}
.caret{border:2px solid transparent;border-top-color:#333;border-bottom:0;margin-left:2px}

.ribbon{display:flex;height:77px;flex:none;background:#c4c4c4;border-bottom:1px solid #a8a8a8;gap:1px}
.group{display:flex;flex-direction:column;background:#f9f9f9;border-right:1px solid #e8e8e8}
.group h2{height:13px;line-height:15px;text-align:center;background:#e8e8e8;margin:0 1px}
.items{flex:1;display:grid;min-height:0}
.rb{flex-direction:column;justify-content:flex-start;padding-top:4px;line-height:10px;white-space:nowrap}
.rb svg{width:25px;height:24px;margin-bottom:5px}
.rb.on{background:linear-gradient(#93d0f6,#86d2fd);border:1px solid #4aa0d8;border-radius:1px;padding-top:3px}
.rb.off{color:#a9a9a9;border-left:1px solid #ccc;border-image:linear-gradient(#eee,#999,#eee) 1}
.items svg{flex:none}
.g-proy{width:41px}
.g-modelo{width:188px}.g-modelo .items{grid-template-columns:48px 38px 48px 52px;padding-left:3px}
.g-elem{width:218px}.g-elem .items{grid-template-columns:46px 34px 46px 42px 46px;padding-left:3px}
.g-edic,.g-conex,.g-anot{flex:none}
.g-edic .items,.g-conex .items,.g-anot .items{grid-auto-rows:31px}
.g-edic{width:190px}.g-edic .items{grid-template-columns:repeat(6,31px);padding-left:1px}
.g-conex{width:66px}.g-conex .items{grid-template-columns:33px 33px}
.g-vista{width:43px}
.g-fill{flex:1}
.g-visu{width:76px}.g-visu .items{grid-template-columns:34px 38px}
.g-anot{width:96px}.g-anot .items{grid-template-columns:31px 31px 31px;padding-left:1px}
.g-bim{width:114px}.g-bim .items{grid-template-columns:42px 38px 32px;padding-left:1px}
.items button:not(.rb) svg{width:24px;height:24px}
.items .caret{border-width:3px;border-bottom:0;margin-left:5px}
.ic-3d{font:700 9px Roboto,sans-serif;fill:#2b5f99}
.ic-tx{font:700 6px "Liberation Serif",serif;fill:#1b4d85}
.ic-a{font:700 13px "Liberation Sans",sans-serif;fill:#1b4d85}
.ic-as{font:700 10px "Liberation Sans",sans-serif;fill:#1b4d85}

.work{flex:1;display:flex;min-height:0;padding:4px 5px 4px 6px}
.side{width:379px;display:flex;flex-direction:column;flex:none}
.panel{background:#ececec;border:1px solid #f6f6f6;padding:0 2px 2px}
.bar{display:flex;align-items:center;height:24px}
.bar button{width:20px;height:20px}
.bar .tsep{height:17px;margin:0 3px;background:#bbb}
.bar.slim button{width:19px}
.bar.slim .tsep{margin:0 2px}
.grow{flex:1}
.list{height:73px;background:#fff;border:1px solid #9a9aa6}
table{border-collapse:collapse;table-layout:fixed;width:100%}
.c-ref{width:80px}.c-ins{width:83px}.c-dxf{width:28px}
th{height:22px;background:#e3e3e3;font-weight:400;text-align:left;padding:0 4px;border-right:1px solid #cfcfcf;white-space:nowrap}
th:last-child{border-right:0}
td{height:18px;padding:0 4px;border-right:1px solid #fff}
th:nth-child(n+2),td:nth-child(n+2){text-align:right}
th:first-child,td:first-child{padding-left:5px}
th:last-child,td:last-child{text-align:center;padding:0}
.ref{background:#d9d9d9}
.sel{background:#c9dde8}.sel .ref{background:#d0d9df}
input[type=checkbox]{appearance:none;width:10px;height:10px;margin:0;border:1px solid #777;background:#fff;vertical-align:middle;display:inline-flex}
input[type=checkbox]:checked::before{content:"";flex:1;background:#000;clip-path:polygon(5% 45%,5% 75%,38% 95%,95% 40%,95% 8%,38% 62%)}
.split-h{height:6px;flex:none;display:flex}
.split-h::before{content:"";width:12px;height:2px;margin:auto;background:repeating-linear-gradient(90deg,#666 0 2px,transparent 2px 3px)}
.view{flex:1;display:flex;flex-direction:column;min-height:0}
.bar.slim{height:23px;flex:none}
.scene{flex:1;background:linear-gradient(#808080,#d5d5d5);overflow:hidden;min-height:0;border-left:1px solid #777}
.scene svg,.drawing{display:block;width:100%;height:100%}
.split-v{width:5px;flex:none;display:flex}
.split-v::before{content:"";width:2px;height:12px;margin:auto;background:repeating-linear-gradient(#555 0 2px,transparent 2px 3px)}

.plan{flex:1;min-width:0;position:relative;display:grid;grid-template:minmax(0,1fr) 13px / minmax(0,1fr) 13px;background:#efefef}
.drawing{background:#fff;min-height:0}
.lbl{font:10px "Liberation Sans",sans-serif;fill:#1c1c1c}
.vlbl{font:6px "Liberation Sans",sans-serif;fill:#4d6fa8}
.sb{display:flex;align-items:center}
.sb.v{flex-direction:column;grid-column:2;grid-row:1}
.sb.h{grid-row:2;grid-column:1}
.thumb{border:1px solid #b0b0b0;border-radius:1px;display:flex}
.thumb::before{content:"";margin:auto;width:6px;height:6px}
.v .thumb{width:12px;flex:398;background:linear-gradient(90deg,#f0f0f0 45%,#c9cacd)}
.v .thumb::before{background:repeating-linear-gradient(#777 0 1px,transparent 1px 2px)}
.h .thumb{height:12px;flex:662;background:linear-gradient(#f0f0f0 45%,#c9cacd)}
.h .thumb::before{background:repeating-linear-gradient(90deg,#777 0 1px,transparent 1px 2px)}
.v .g1{flex:211}.v .g2{flex:55}
.h .g1{flex:264}.h .g2{flex:173}
.arr{width:14px;height:14px;flex:none;display:flex}
.arr::before{content:"";margin:auto;border:3px solid transparent}
.up::before{border-bottom-color:#333;border-top:0}.dn::before{border-top-color:#333;border-bottom:0}
.lf::before{border-right-color:#333;border-left:0}.rt::before{border-left-color:#333;border-right:0}

.dialog{position:absolute;top:52px;left:0;right:0;margin:0 auto;width:449px;background:#ececec;border:4px solid #1860ab;border-top:0;outline:1px solid #1a4f93;outline-offset:-1px}
.dialog header{display:flex;height:25px;margin:0 -4px;background:#1860ab;border-bottom:1px solid #6f9fd4;align-items:center;color:#fff;padding:4px 17px 0 4px}
.dialog header h2{flex:1;text-align:center;font:700 10px/20px Roboto,"Liberation Sans",sans-serif;padding-right:12px}
.dialog header svg{width:12px;height:12px}
.dbody{padding:4px 4px 5px 5px}
.frame{border:1px solid #888;background:#fafafa;padding:8px 4px 5px 5px}
.frame p{padding-left:2px}
.radios{display:flex;align-items:center;height:20px;margin-top:6px;padding-left:2px}
.radios label{display:flex;align-items:center}
.radios span{width:89px}
.radios label:first-of-type{width:108px}
.radios .b{font:700 10px/12px Roboto,sans-serif;color:#000}
input[type=radio]{appearance:none;width:10px;height:10px;margin:0 3px 0 0;border:1px solid #999;border-radius:50%;background:#e6e6e6}
input[type=radio]:checked{background:radial-gradient(circle,#1c6ea4 35%,#eee 55%);border-color:#777}
.tabs{display:flex;align-items:flex-end;background:#f0f0f0;height:18px;margin-top:3px}
.tabs button{height:16px;width:46px;background:#d9d9d9;border:1px solid #999;border-left-color:#bbb;margin-right:1px;padding-top:1px;white-space:nowrap;margin-bottom:1px}
.tabs button[aria-selected=true]{height:18px;width:48px;background:#fff;border-bottom:0;margin:0;padding-bottom:1px}
.page{border:1px solid #b5b5b5;border-top:0;padding:1px 1px 2px 2px;background:#fff;margin-right:2px}
.page-in{border:1px solid #888;background:#fafafa;padding:4px 4px 38px}
.box{border:1px solid #7c7c7c;margin-bottom:6px;padding-bottom:5px}
.box h3{background:#d4d4d4;border-bottom:1px solid #7c7c7c;padding:1px 5px;height:14px}
fieldset{margin:5px 5px 0;padding:0 3px 3px;border:1px solid #dce4ea;border-radius:2px;min-width:0}
fieldset + fieldset{margin-top:6px}
legend{padding:0 2px}
.note{background:#fdf3db;border:1px solid #d2c38c;height:33px;padding:4px 5px}
.row{display:flex;align-items:center;height:21px;padding:0 3px 0 2px}
.row label{flex:1}
.row input{width:42px;height:16px;border:1px solid #e0e4e8;border-top-color:#aaa;background:#fff;text-align:right;font:inherit;padding:0 3px;outline:0;color:#111}
.row input.focus{border-color:#9ccbec}
.row span{width:12px;text-align:right}
input::selection{background:#3397ff;color:#fff}
.color{display:flex;align-items:center;justify-content:space-between;height:24px;padding-left:1px}
.swatch{width:38px;height:36px;border:2px solid #e8202c;border-radius:7px;margin:-6px -3px}
.swatch i{width:20px;height:20px;background:#f00}
.dialog footer{display:flex;justify-content:space-between;background:#e1e1e1;border-top:1px solid #ccc;padding:5px;height:28px}
.dialog footer button{width:49px;height:16px;border:1px solid #808080;border-radius:2px;background:linear-gradient(#f4f4f4 50%,#dcdcdc 50%)}
.dialog footer .def{border-color:#35a5cf;box-shadow:inset 0 0 0 1px #8fd6f0}
.bottom{height:3px;flex:none;background:#777;border-top:1px solid #999}
```
FILE: main.js
```js
const first = document.getElementById("sep");
first.focus();
first.select();
```
